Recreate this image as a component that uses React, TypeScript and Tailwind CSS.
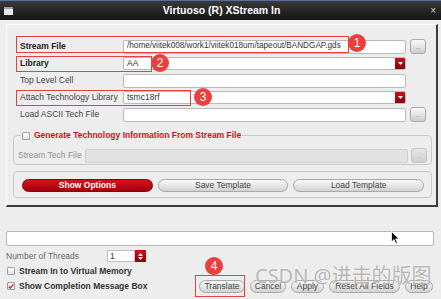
import React from "react";

const Field = ({ text = "", className = "" }: { text?: string; className?: string }) => (
  <div className={`h-[14px] bg-white border border-[#b9b9b9] rounded-[2px] flex items-center px-[3px] text-[8.5px] text-[#333] whitespace-nowrap overflow-hidden ${className}`}>
    {text}
  </div>
);

const Dots = ({ disabled = false }: { disabled?: boolean }) => (
  <div
    className={`w-[16px] h-[15px] shrink-0 rounded-[3px] border flex items-end justify-center pb-[3px] text-[6px] leading-none ${
      disabled
        ? "border-[#c4c4c4] bg-gradient-to-b from-[#e6e6e6] to-[#cfcfcf] text-[#999]"
        : "border-[#a9a9a9] bg-gradient-to-b from-[#fafafa] to-[#cdcdcd] text-[#666]"
    }`}
  >
    ...
  </div>
);

const Combo = ({ text }: { text: string }) => (
  <div className="flex-1 h-[13px] bg-white border border-[#b9b9b9] rounded-[2px] flex items-center text-[8.5px] text-[#333] overflow-hidden">
    <span className="flex-1 px-[3px]">{text}</span>
    <div className="w-[10px] h-full bg-gradient-to-b from-[#c8141a] to-[#8a0008] flex items-center justify-center">
      <svg width="5" height="3" viewBox="0 0 5 3">
        <path d="M0 0h5L2.5 3z" fill="#fff" />
      </svg>
    </div>
  </div>
);

const Check = ({ checked = false }: { checked?: boolean }) => (
  <div className="w-[8px] h-[8px] shrink-0 rounded-[1px] border border-[#a0a0a0] bg-gradient-to-b from-white to-[#e2e2e2] flex items-center justify-center">
    {checked && (
      <svg width="8" height="7" viewBox="0 0 8 7">
        <path d="M1 3.5l2 2.2L7.2 0.8" fill="none" stroke="#d0101a" strokeWidth="1.6" />
      </svg>
    )}
  </div>
);

const Pill = ({ label, red = false, className = "" }: { label: string; red?: boolean; className?: string }) => (
  <div
    className={`h-[13px] rounded-full flex items-center justify-center text-[8.5px] leading-none whitespace-nowrap ${
      red
        ? "bg-gradient-to-b from-[#d4141c] to-[#a50008] border border-[#8a0008] text-white font-bold"
        : "bg-gradient-to-b from-[#fbfbfb] to-[#d2d2d2] border border-[#a8a8a8] text-[#444]"
    } ${className}`}
  >
    {label}
  </div>
);

const Badge = ({ n, x, y }: { n: number; x: number; y: number }) => (
  <div
    className="absolute w-[18px] h-[18px] rounded-full bg-[#e8403c] text-white text-[12px] flex items-center justify-center leading-none"
    style={{ left: x - 9, top: y - 9 }}
  >
    {n}
  </div>
);

const Mark = ({ x, y, w, h }: { x: number; y: number; w: number; h: number }) => (
  <div className="absolute border-[1.5px] border-[#e8403c]" style={{ left: x, top: y, width: w, height: h }} />
);

export default function App() {
  return (
    <div className="relative w-[441px] h-[299px] overflow-hidden bg-[#ededed] font-['Liberation_Sans',Arial,sans-serif] text-[#333]">
      {/* title bar */}
      <div className="h-[20px] flex items-center px-[4px] border-t border-[#56729a] bg-gradient-to-b from-[#3a3a3a] to-[#141414]">
        <div className="w-[9px] h-[8px] bg-[#e8e8e8] border-t-2 border-[#8aa0bb]" />
        <div className="flex-1 text-center text-white font-bold text-[10.5px]">Virtuoso (R) XStream In</div>
        <div className="text-[#cfcfcf] text-[10px] pr-[1px]">×</div>
      </div>

      <div className="px-[6px] pt-[4px]">
        {/* main panel */}
        <div className="h-[183px] w-[432px] border-t border-l border-[#fcfcfc] border-r-2 border-b-2 border-r-[#3c3c3c] border-b-[#3c3c3c]">
          <div className="pt-[13px] pl-[13px] pr-[10px]">
            <div className="h-[17px] flex items-center">
              <div className="w-[103px] font-bold text-[8.5px] text-[#222]">Stream File</div>
              <Field className="flex-1 !text-[8.2px]" text="/home/viitek008/work1/viitek018um/tapeout/BANDGAP.gds" />
              <div className="ml-[4px]"><Dots /></div>
            </div>
            <div className="h-[17px] flex items-center">
              <div className="w-[103px] font-bold text-[8.5px] text-[#222]">Library</div>
              <Combo text="AA" />
              <div className="w-[20px]" />
            </div>
            <div className="h-[17px] flex items-center">
              <div className="w-[103px] text-[8.5px] text-[#444]">Top Level Cell</div>
              <Field className="flex-1" />
              <div className="w-[20px]" />
            </div>
            <div className="h-[17px] flex items-center">
              <div className="w-[103px] text-[8.5px] text-[#444] whitespace-nowrap">Attach Technology Library</div>
              <Combo text="tsmc18rf" />
              <div className="w-[20px]" />
            </div>
            <div className="h-[17px] flex items-center">
              <div className="w-[103px] text-[8.5px] text-[#444]">Load ASCII Tech File</div>
              <Field className="flex-1" />
              <div className="ml-[4px]"><Dots /></div>
            </div>
          </div>

          {/* generate tech group */}
          <div className="mt-[12px] ml-[6px] mr-[4px] h-[30px] border border-[#c9c9c9] rounded-[4px]">
            <div className="-mt-[6px] ml-[7px] w-fit h-[11px] px-[1px] flex items-center gap-[4px] bg-[#ededed]">
              <Check />
              <span className="text-[8.5px] font-bold text-[#d0101a]">Generate Technology Information From Stream File</span>
            </div>
            <div className="mt-[7px] h-[15px] pl-[4px] pr-[4px] flex items-center">
              <div className="w-[67px] text-[8.5px] text-[#8f8f8f] whitespace-nowrap">Stream Tech File</div>
              <div className="flex-1 h-[14px] rounded-[2px] border border-[#cfcfcf] bg-[#e2e2e2]" />
              <div className="ml-[3px]"><Dots disabled /></div>
            </div>
          </div>

          {/* template buttons group */}
          <div className="mt-[6px] ml-[6px] mr-[4px] h-[27px] border border-[#c9c9c9] rounded-[4px] pt-[7px] pl-[8px] pr-[7px] flex gap-[5px] items-start">
            <Pill label="Show Options" red className="flex-1" />
            <Pill label="Save Template" className="flex-1" />
            <Pill label="Load Template" className="flex-1" />
          </div>
        </div>

        {/* status field */}
        <div className="mt-[24px] w-[428px] h-[15px] bg-white border border-[#b5b5b5] rounded-[2px]" />

        <div className="mt-[4px] h-[12px] flex items-center">
          <div className="w-[101px] text-[8.5px] text-[#6a6a6a]">Number of Threads</div>
          <div className="w-[28px] h-[12px] bg-white border border-[#c0c0c0] text-[8.5px] flex items-center px-[2px]">1</div>
          <div className="w-[11px] h-[12px] bg-gradient-to-b from-[#c8141a] to-[#8a0008] flex flex-col items-center justify-center gap-[1px]">
            <svg width="5" height="3" viewBox="0 0 5 3"><path d="M0 3h5L2.5 0z" fill="#fff" /></svg>
            <svg width="5" height="3" viewBox="0 0 5 3"><path d="M0 0h5L2.5 3z" fill="#fff" /></svg>
          </div>
        </div>

        <div className="mt-[2px] h-[14px] flex items-center gap-[4px] pl-[1px]">
          <Check />
          <span className="text-[8.5px] font-bold text-[#333]">Stream In to Virtual Memory</span>
        </div>

        <div className="h-[16px] flex items-center pl-[1px]">
          <Check checked />
          <span className="ml-[4px] text-[8.5px] font-bold text-[#333]">Show Completion Message Box</span>
          <div className="ml-auto mr-[2px] flex gap-[5px]">
            <Pill label="Translate" className="w-[46px]" />
            <Pill label="Cancel" className="w-[36px]" />
            <Pill label="Apply" className="w-[33px]" />
            <Pill label="Reset All Fields" className="w-[71px]" />
            <Pill label="Help" className="w-[28px]" />
          </div>
        </div>
      </div>

      {/* annotations */}
      <Mark x={16} y={36} w={333} h={17} />
      <Mark x={16} y={56} w={136} h={16} />
      <Mark x={16} y={90} w={175} h={16} />
      <Mark x={195} y={275} w={50} h={22} />
      <Badge n={1} x={357} y={43} />
      <Badge n={2} x={160} y={63} />
      <Badge n={3} x={203} y={97} />
      <Badge n={4} x={214} y={266} />

      {/* watermark */}
      <div className="absolute left-[255px] top-[266px] text-[20px] leading-none whitespace-nowrap text-[#7a7a7a]/55 font-['Noto_Sans','Noto_Sans_CJK_SC',sans-serif] [text-shadow:0_0_1px_#fff]">
        CSDN @进击的版图
      </div>

      {/* mouse pointer */}
      <svg className="absolute left-[391px] top-[231px]" width="9" height="13" viewBox="0 0 9 13">
        <path d="M0.5 0.5v10.5l2.5-2.4 1.8 3.9 1.6-0.8-1.8-3.8h3.4z" fill="#000" stroke="#fff" strokeWidth="0.8" />
      </svg>
    </div>
  );
}
